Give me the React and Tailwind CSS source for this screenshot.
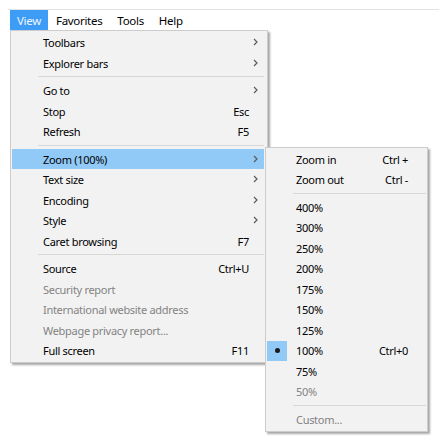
import React from "react";

/*
  View menu, opened on Zoom, in the old Explorer style.
*/

const mainItems = [
  { label: "Toolbars", sub: true },
  { label: "Explorer bars", sub: true },
  { sep: true },
  { label: "Go to", sub: true },
  { label: "Stop", key: "Esc" },
  { label: "Refresh", key: "F5" },
  { sep: true },
  { label: "Zoom (100%)", sub: true, active: true },
  { label: "Text size", sub: true },
  { label: "Encoding", sub: true },
  { label: "Style", sub: true },
  { label: "Caret browsing", key: "F7" },
  { sep: true },
  { label: "Source", key: "Ctrl+U" },
  { label: "Security report", off: true },
  { label: "International website address", off: true },
  { label: "Webpage privacy report...", off: true },
  { label: "Full screen", key: "F11" },
];

const zoomItems = [
  { label: "Zoom in", key: "Ctrl +" },
  { label: "Zoom out", key: "Ctrl -" },
  { sep: true },
  { label: "400%" },
  { label: "300%" },
  { label: "250%" },
  { label: "200%" },
  { label: "175%" },
  { label: "150%" },
  { label: "125%" },
  { label: "100%", key: "Ctrl+0", checked: true },
  { label: "75%" },
  { label: "50%", off: true },
  { sep: true },
  { label: "Custom...", off: true },
];

const Chevron = () => (
  <svg width="5" height="8" viewBox="0 0 5 8">
    <path d="M1 1 L4 4 L1 7" fill="none" stroke="#5a5a5a" strokeWidth="1.2" />
  </svg>
);

const Separator = ({ h }) => (
  <div className={`flex items-center ml-[26px] ${h}`}>
    <div className="w-full border-t border-[#d7d7d7]" />
  </div>
);

export default function App() {
  return (
    <div
      className="relative w-[439px] h-[442px] bg-white text-[11px] tracking-[-0.3px] text-black overflow-hidden"
      style={{ fontFamily: '"Noto Sans", "Open Sans", sans-serif' }}
    >
      {/* menu bar */}
      <div className="ml-[8px] mt-[9px] border-t border-[#e3e3e3]" />
      <div className="flex h-[20px] pl-[10px] leading-[22px] text-[11.5px]">
        <div className="px-[7px] bg-[#3d9cf5] text-[#eef6ff]">View</div>
        <div className="px-[7px] ml-[1px]">Favorites</div>
        <div className="px-[7px] ml-[1px]">Tools</div>
        <div className="px-[7px] ml-[1px]">Help</div>
      </div>

      {/* view dropdown */}
      <div className="absolute left-[10px] top-[30px] w-[258px] bg-[#f2f2f2] border border-[#cccccc] pl-[1px] pr-[3px] pt-[1px] pb-[1px] shadow-[2px_2px_2px_rgba(0,0,0,0.35)]">
        {mainItems.map((item, i) =>
          item.sep ? (
            <Separator key={i} h="h-[7px]" />
          ) : (
            <div
              key={i}
              className={`flex items-center h-[20.5px] pl-[31px] ${
                item.active ? "bg-[#91c9f7]" : ""
              } ${item.off ? "text-[#838383]" : ""}`}
            >
              <span className="flex-1 pt-[2px] whitespace-nowrap">{item.label}</span>
              {item.key && <span className="pt-[2px]">{item.key}</span>}
              <span className="w-[15px] flex justify-end pr-[6px]">
                {item.sub && <Chevron />}
              </span>
            </div>
          )
        )}
      </div>

      {/* zoom submenu */}
      <div className="absolute left-[265px] top-[147px] w-[163px] bg-[#f2f2f2] border border-[#cccccc] p-[1px] shadow-[2px_2px_2px_rgba(0,0,0,0.35)]">
        {zoomItems.map((item, i) =>
          item.sep ? (
            <Separator key={i} h="h-[7px]" />
          ) : (
            <div
              key={i}
              className={`flex items-center h-[20.5px] pr-[18px] ${
                item.off ? "text-[#838383]" : ""
              }`}
            >
              <span
                className={`w-[20px] h-full flex items-center justify-center ${
                  item.checked ? "bg-[#91c9f7]" : ""
                }`}
              >
                {item.checked && (
                  <span className="w-[5px] h-[5px] rounded-full bg-[#1a1a1a]" />
                )}
              </span>
              <span className="flex-1 pl-[9px] pt-[1px] whitespace-nowrap">{item.label}</span>
              {item.key && <span className="pt-[1px]">{item.key}</span>}
            </div>
          )
        )}
      </div>
    </div>
  );
}
